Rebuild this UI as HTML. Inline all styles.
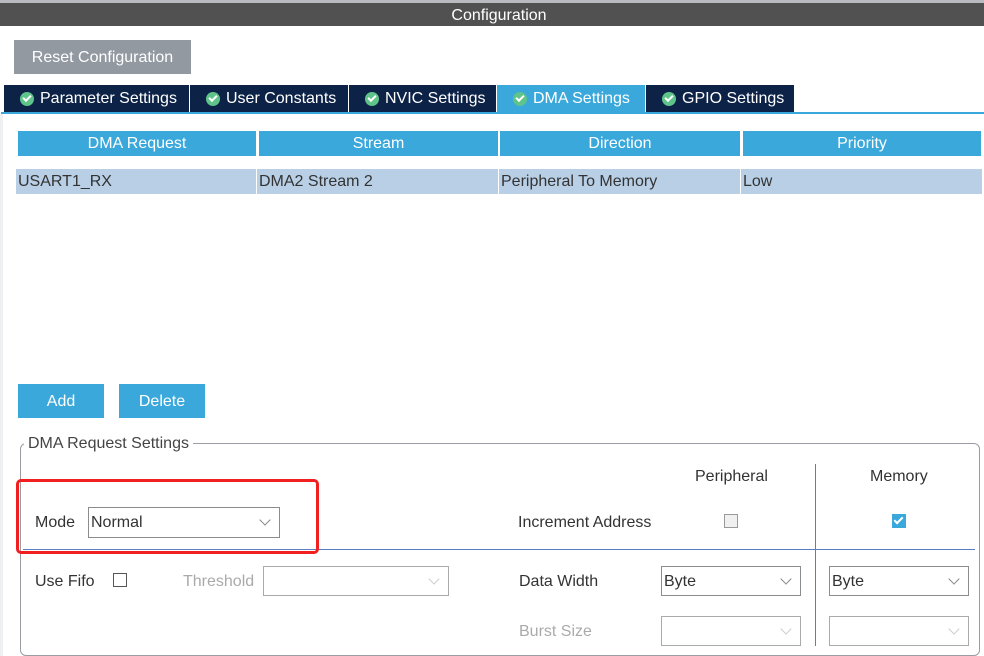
<!DOCTYPE html>
<html><head><meta charset="utf-8"><style>
*{box-sizing:border-box;margin:0;padding:0}
body{width:984px;height:656px;overflow:hidden;background:#fff;font-family:"Liberation Sans",sans-serif;font-size:16px;color:#333;position:relative}
.a{position:absolute}
.tab{position:absolute;top:85px;height:27px;background:#0d2247;color:#fff;line-height:28px;font-size:16px;padding-left:36px}
.tab i{position:absolute;left:16px;top:7px;width:14px;height:14px;border-radius:50%;background:#5fc48a}
.tab i:after{content:"";position:absolute;left:3px;top:3px;width:6px;height:3px;border-left:2px solid #fff;border-bottom:2px solid #fff;transform:rotate(-45deg)}
.th{position:absolute;top:131px;height:25px;background:#3aa8da;color:#fff;text-align:center;line-height:26px}
.td{position:absolute;top:169px;height:25px;background:#b8cfe6;line-height:26px;padding-left:2px}
.btn{position:absolute;top:384px;height:34px;background:#3aa8da;color:#fff;text-align:center;line-height:36px}
.sel{position:absolute;border:1px solid #8a8d90;background:#fff;line-height:29px;padding-left:2px}
.sel:after{content:"";position:absolute;right:10px;top:8px;width:7px;height:7px;border-right:1px solid #888;border-bottom:1px solid #888;transform:rotate(45deg)}
.dis{border-color:#aaa}.dis:after{border-color:#ccc}
.cb{position:absolute;width:14px;height:14px;border:1px solid #555}
</style></head><body>
<div class="a" style="left:0;top:0;width:984px;height:3px;background:#b8bcc0"></div>
<div class="a" style="left:0;top:3px;width:984px;height:23px;background:#505150;color:#fff;text-align:center;line-height:25px;padding-left:14px">Configuration</div>
<div class="a" style="left:14px;top:40px;width:177px;height:34px;background:#9299a0;color:#fff;text-align:center;line-height:36px">Reset Configuration</div>
<div class="tab" style="left:4px;width:185px"><i></i>Parameter Settings</div>
<div class="tab" style="left:190px;width:158px"><i></i>User Constants</div>
<div class="tab" style="left:349px;width:147px"><i></i>NVIC Settings</div>
<div class="tab" style="left:497px;width:148px;background:#3aa8da"><i></i>DMA Settings</div>
<div class="tab" style="left:646px;width:148px"><i></i>GPIO Settings</div>
<div class="a" style="left:1px;top:112px;width:983px;height:2px;background:#3aa8da"></div>
<div class="a" style="left:0;top:114px;width:3px;height:542px;background:#eef0f2"></div>
<div class="th" style="left:18px;width:238px">DMA Request</div>
<div class="th" style="left:259px;width:239px">Stream</div>
<div class="th" style="left:500px;width:240px">Direction</div>
<div class="th" style="left:743px;width:238px">Priority</div>
<div class="td" style="left:16px;width:240px">USART1_RX</div>
<div class="td" style="left:257px;width:241px">DMA2 Stream 2</div>
<div class="td" style="left:499px;width:241px">Peripheral To Memory</div>
<div class="td" style="left:741px;width:241px">Low</div>
<div class="btn" style="left:18px;width:86px">Add</div>
<div class="btn" style="left:119px;width:86px">Delete</div>
<div class="a" style="left:20px;top:443px;width:960px;height:213px;border:1px solid #9a9ea2;border-radius:6px"></div>
<div class="a" style="left:24px;top:434px;background:#fff;padding:0 4px;line-height:20px;color:#444">DMA Request Settings</div>
<div class="a" style="left:23px;top:549px;width:952px;height:1px;background:#5a7fbf"></div>
<div class="a" style="left:815px;top:464px;width:1px;height:182px;background:#5a7fbf"></div>
<div class="a" style="left:16px;top:479px;width:303px;height:75px;border:3px solid #f02020;border-radius:5px"></div>
<div class="a" style="left:35px;top:514px">Mode</div>
<div class="sel" style="left:88px;top:507px;width:192px;height:31px;line-height:30px">Normal</div>
<div class="a" style="left:695px;top:468px">Peripheral</div>
<div class="a" style="left:870px;top:468px">Memory</div>
<div class="a" style="left:518px;top:514px">Increment Address</div>
<div class="cb" style="left:724px;top:514px;border-color:#999;background:#f0f0f0"></div>
<div class="cb" style="left:892px;top:514px;border:none;background:#3aa8da"><span class="a" style="left:4px;top:1px;width:5px;height:9px;border-right:2px solid #fff;border-bottom:2px solid #fff;transform:rotate(45deg)"></span></div>
<div class="a" style="left:35px;top:573px">Use Fifo</div>
<div class="cb" style="left:113px;top:573px"></div>
<div class="a" style="left:183px;top:573px;color:#aaa">Threshold</div>
<div class="sel dis" style="left:263px;top:566px;width:186px;height:30px"></div>
<div class="a" style="left:519px;top:573px">Data Width</div>
<div class="sel" style="left:661px;top:566px;width:140px;height:30px">Byte</div>
<div class="sel" style="left:829px;top:566px;width:140px;height:30px">Byte</div>
<div class="a" style="left:519px;top:623px;color:#aaa">Burst Size</div>
<div class="sel dis" style="left:661px;top:616px;width:140px;height:30px"></div>
<div class="sel dis" style="left:829px;top:616px;width:140px;height:30px"></div>
</body></html>
